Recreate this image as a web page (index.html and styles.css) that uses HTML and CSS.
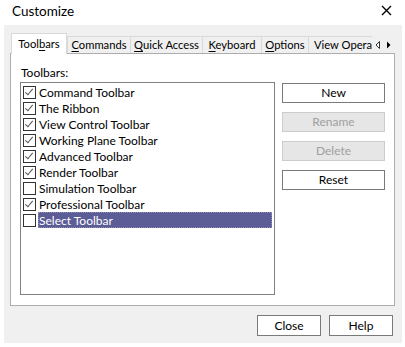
FILE: index.html
```html
<!DOCTYPE html>
<html lang="en">
  <head>
    <meta charset="UTF-8" />
    <title>Customize</title>
    <link rel="stylesheet" href="styles.css">
  </head>
  <body>
    <div class="window">
      <div class="titlebar">
        <span class="title">Customize</span>
        <svg class="close-icon" width="11" height="11" viewBox="0 0 11 11">
          <path d="M1 1 L10 10 M10 1 L1 10" stroke="#000" stroke-width="1.4" fill="none" />
        </svg>
      </div>

      <div class="dialog">
        <div class="tabs">
          <div class="tab active">Tool<u>b</u>ars</div>
          <div class="tab tab-commands"><u>C</u>ommands</div>
          <div class="tab tab-quick"><u>Q</u>uick Access</div>
          <div class="tab tab-keyboard"><u>K</u>eyboard</div>
          <div class="tab tab-options"><u>O</u>ptions</div>
          <div class="tab tab-view">View Opera</div>
          <div class="tab-arrows">
            <svg width="20" height="10" viewBox="0 0 20 10">
              <path d="M5.5 1.5 L2 5 L5.5 8.5 Z" fill="#fff" stroke="#333" stroke-width="1" />
              <path d="M13 1.5 L16.5 5 L13 8.5 Z" fill="#000" />
            </svg>
          </div>
        </div>

        <div class="panel">
          <div class="list-area">
            <div class="label">Toolbars:</div>
            <div class="listbox">
              <div class="row"><span class="check on"></span><span class="row-text">Command Toolbar</span></div>
              <div class="row"><span class="check on"></span><span class="row-text">The Ribbon</span></div>
              <div class="row"><span class="check on"></span><span class="row-text">View Control Toolbar</span></div>
              <div class="row"><span class="check on"></span><span class="row-text">Working Plane Toolbar</span></div>
              <div class="row"><span class="check on"></span><span class="row-text">Advanced Toolbar</span></div>
              <div class="row"><span class="check on"></span><span class="row-text">Render Toolbar</span></div>
              <div class="row"><span class="check"></span><span class="row-text">Simulation Toolbar</span></div>
              <div class="row"><span class="check on"></span><span class="row-text">Professional Toolbar</span></div>
              <div class="row selected"><span class="check"></span><span class="row-text">Select Toolbar</span></div>
            </div>
          </div>

          <div class="side-buttons">
            <button class="btn">New</button>
            <button class="btn" disabled>Rename</button>
            <button class="btn" disabled>Delete</button>
            <button class="btn">Reset</button>
          </div>
        </div>

        <div class="footer">
          <button class="btn footer-btn">Close</button>
          <button class="btn footer-btn">Help</button>
        </div>
      </div>
    </div>
  </body>
</html>
```

FILE: styles.css
```css
body {
  margin: 0;
  padding: 0;
  background-color: #fff;
  font-family: Lato, "Noto Sans", sans-serif;
  font-size: 12px;
  color: #000;
}

.window {
  width: 405px;
  height: 347px;
  overflow: hidden;
}

.titlebar {
  height: 25px;
  display: flex;
  align-items: center;
  justify-content: space-between;
  padding: 0 13px 3px 12px;
  box-sizing: border-box;
}

.title {
  font-size: 13.5px;
}

.close-icon {
  display: block;
  margin-top: -1px;
}

.dialog {
  margin: 0 3px 0 4px;
  height: 318px;
  background-color: #f0f0f0;
  padding: 8px 7px 0 6px;
  box-sizing: border-box;
}

/* tabs */

.tabs {
  display: flex;
  align-items: flex-end;
  height: 20px;
  position: relative;
  width: 363px;
}

.tab {
  height: 17px;
  line-height: 16px;
  font-size: 11.2px;
  border-top: 1px solid #d9d9d9;
  border-left: 1px solid #d9d9d9;
  text-align: center;
  white-space: nowrap;
  box-sizing: border-box;
  flex-shrink: 0;
  background-color: #f0f0f0;
}

.tab u {
  text-decoration-thickness: 1px;
  text-underline-offset: 2px;
}

.tab.active {
  height: 21px;
  margin-bottom: -1px;
  width: 56px;
  margin-left: 1px;
  line-height: 19px;
  background-color: #fff;
  border: 1px solid #d9d9d9;
  border-bottom: none;
  position: relative;
  z-index: 1;
}

.tab-commands {
  width: 63px;
}

.tab-quick {
  width: 72px;
}

.tab-keyboard {
  width: 59px;
}

.tab-options {
  width: 47px;
}

.tab-view {
  width: 64px;
  text-align: left;
  padding-left: 5px;
  overflow: hidden;
}

.tab-arrows {
  position: absolute;
  right: -22px;
  top: 3px;
  width: 22px;
  height: 17px;
  display: flex;
  align-items: center;
  background-color: #f0f0f0;
}

.tab-arrows svg {
  display: block;
  margin-left: 1px;
}

/* panel */

.panel {
  height: 253px;
  border: 1px solid #adadad;
  background-color: #fff;
  box-sizing: border-box;
  display: flex;
  padding: 11px 9px 0 9px;
}

.label {
  height: 17px;
  line-height: 15px;
  padding-left: 1px;
}

.listbox {
  width: 255px;
  height: 213px;
  border: 1px solid #828282;
  box-sizing: border-box;
  padding: 1px 1px 0 1px;
}

.row {
  height: 16px;
  display: flex;
  align-items: center;
}

.check {
  width: 13px;
  height: 13px;
  border: 1px solid #333;
  box-sizing: border-box;
  margin: 0 2px 0 1px;
  background-color: #fff;
  position: relative;
}

.check.on::after {
  content: "";
  position: absolute;
  left: 3px;
  top: 0px;
  width: 3px;
  height: 7px;
  border-right: 1px solid #555;
  border-bottom: 1px solid #555;
  transform: rotate(40deg);
}

.row-text {
  flex: 1;
  height: 16px;
  line-height: 17px;
  padding-left: 1px;
}

.row.selected .row-text {
  background-color: #5c5c96;
  color: #fff;
  outline: 1px dotted #8c8cb4;
  outline-offset: -1px;
  margin-right: 1px;
}

.side-buttons {
  display: flex;
  flex-direction: column;
  gap: 9px;
  margin-left: 7px;
  padding-top: 18px;
}

/* buttons */

.btn {
  width: 103px;
  height: 20px;
  padding: 0;
  border: 1px solid #7a7a7a;
  background-color: #fff;
  font-family: Lato, "Noto Sans", sans-serif;
  font-size: 12px;
  color: #000;
  line-height: 16px;
}

.btn:disabled {
  background-color: #e6e6e6;
  border-color: #cccccc;
  color: #a0a0a0;
}

.footer {
  display: flex;
  justify-content: flex-end;
  gap: 8px;
  padding: 9px 2px 0 0;
}

.footer-btn {
  width: 64px;
  height: 21px;
}
```
